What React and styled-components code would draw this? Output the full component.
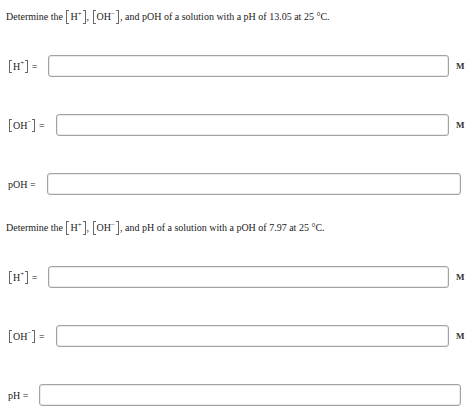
import React from "react";
import styled, { createGlobalStyle } from "styled-components";

const GlobalStyle = createGlobalStyle`
  body {
    margin: 0;
    background: #ffffff;
    font-family: "Liberation Serif", "Times New Roman", serif;
    color: #222;
  }
`;

const Page = styled.div`
  width: 474px;
  padding-top: 10px;
  box-sizing: border-box;
  font-family: "Liberation Serif", "Times New Roman", serif;
`;

const Section = styled.section`
  display: flex;
  flex-direction: column;
  margin-top: ${(p) => p.$top || 0}px;
`;

const Title = styled.div`
  padding-left: 6px;
  font-size: 10px;
  line-height: 14px;
  height: 14px;
  white-space: pre;
  display: flex;
  align-items: center;
`;

const Rows = styled.div`
  display: flex;
  flex-direction: column;
  gap: 37px;
  margin-top: 31px;
`;

const Row = styled.div`
  display: flex;
  align-items: center;
  height: 22px;
  padding-left: 8px;
  padding-right: 13px;
`;

const Label = styled.div`
  font-size: 10px;
  display: flex;
  align-items: center;
  white-space: pre;
  margin-right: 11px;
`;

const Input = styled.input`
  flex: 1;
  min-width: 0;
  height: 22px;
  box-sizing: border-box;
  border: 1px solid #a3a3a3;
  border-radius: 3px;
  background: #fff;
  box-shadow: inset 0 0 0 0.5px #d6d6d6;
  margin: 0;
  padding: 0 6px;
  outline: none;
`;

const Unit = styled.div`
  width: 12px;
  margin-left: 7px;
  margin-right: -7px;
  font-size: 9px;
  font-weight: 700;
  color: #333;
`;

const Bracket = styled.span`
  display: inline-block;
  width: 2px;
  height: ${(p) => p.$h || 12}px;
  border: 1px solid #666;
  border-${(p) => (p.$side === "left" ? "right" : "left")}: none;
  margin: 0 1px;
`;

const Sup = styled.span`
  font-size: 7px;
  line-height: 7px;
  position: relative;
  top: -3px;
`;

const Species = ({ ion, charge, h }) => (
  <>
    <Bracket $side="left" $h={h} />
    {ion}
    <Sup>{charge}</Sup>
    <Bracket $side="right" $h={h} />
  </>
);

const Field = ({ label, unit }) => (
  <Row>
    <Label>{label}</Label>
    <Input type="text" />
    {unit && <Unit>{unit}</Unit>}
  </Row>
);

const Problem = ({ given, value, find, top }) => (
  <Section $top={top}>
    <Title>
      {"Determine the "}
      <Species ion="H" charge="+" />
      {", "}
      <Species ion="OH" charge="−" />
      {`, and ${find} of a solution with a ${given} of ${value} at 25 °C.`}
    </Title>
    <Rows>
      <Field
        label={
          <>
            <Species ion="H" charge="+" h={11} />
            {" ="}
          </>
        }
        unit="M"
      />
      <Field
        label={
          <>
            <Species ion="OH" charge="−" h={11} />
            {" ="}
          </>
        }
        unit="M"
      />
      <Field label={`${find} =`} />
    </Rows>
  </Section>
);

export default function App() {
  return (
    <Page>
      <GlobalStyle />
      <Problem find="pOH" given="pH" value="13.05" />
      <Problem find="pH" given="pOH" value="7.97" top={26} />
    </Page>
  );
}
